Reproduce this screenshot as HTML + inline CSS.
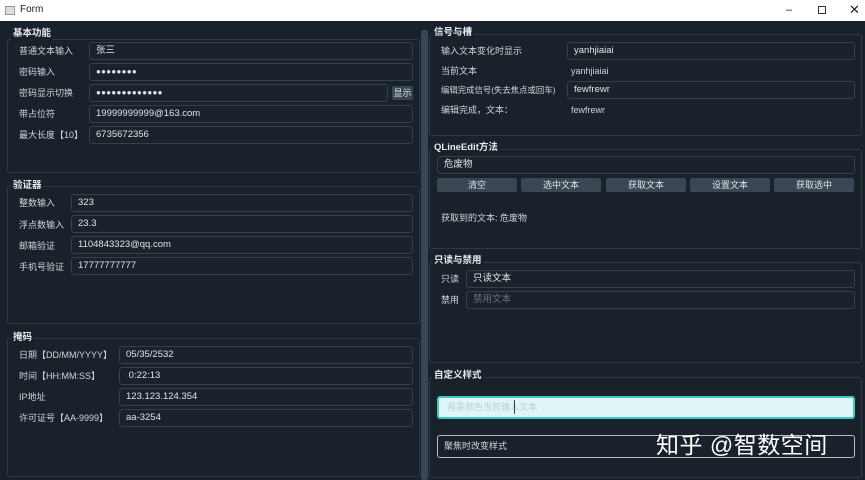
<!DOCTYPE html>
<html><head><meta charset="utf-8"><style>
*{margin:0;padding:0;box-sizing:border-box}
body{width:865px;height:480px;background:#19212b;position:relative;overflow:hidden;font-family:"Liberation Sans","Noto Sans CJK SC",sans-serif;font-size:9.5px;color:#d6dbe0}
.a{position:absolute}
.tb{left:0;top:0;width:865px;height:21px;background:#fff;color:#222;font-size:10px}
.g{border:1px solid #2f3a46;border-radius:3px}
.gt{font-weight:bold;font-size:9.5px;color:#e8ecef;background:#19212b;padding:0 2px;line-height:12px}
.i{border:1px solid #34404c;border-radius:3px;background:#1a222c;height:18px;line-height:16px;padding-left:6px;color:#e0e4e8}
.l{line-height:12px;color:#d0d5da;font-size:9px;white-space:nowrap}
.b{background:#3a4654;border-radius:2px;height:14px;line-height:14px;text-align:center;color:#dfe3e7;font-size:9px}
.p{font-size:8px;letter-spacing:0.3px}
</style></head><body>
<div class="a tb"><span class="a" style="left:5px;top:6px;width:10px;height:9px;border:1px solid #999;background:#ddd"></span><span class="a" style="left:20px;top:4px">Form</span>
<span class="a" style="left:786px;top:0;line-height:21px;font-size:11px">–</span><span class="a" style="left:818px;top:6px;width:8px;height:8px;border:1px solid #333"></span><span class="a" style="left:849px;top:2px;font-size:13px">✕</span></div>
<div class="a" style="left:421px;top:30px;width:7px;height:450px;background:#3a4656;border-radius:2px"></div>

<div class="a g" style="left:7px;top:39px;width:413px;height:134px"></div><div class="a gt" style="left:11px;top:28px">基本功能</div>
<div class="a l" style="left:19px;top:45px">普通文本输入</div><div class="a i" style="left:89px;top:42px;width:324px">张三</div>
<div class="a l" style="left:19px;top:66px">密码输入</div><div class="a i p" style="left:89px;top:63px;width:324px">●●●●●●●●</div>
<div class="a l" style="left:19px;top:87px">密码显示切换</div><div class="a i p" style="left:89px;top:84px;width:299px">●●●●●●●●●●●●●</div><div class="a b" style="left:392px;top:86px;width:21px">显示</div>
<div class="a l" style="left:19px;top:108px">带占位符</div><div class="a i" style="left:89px;top:105px;width:324px">19999999999@163.com</div>
<div class="a l" style="left:19px;top:129px">最大长度【10】</div><div class="a i" style="left:89px;top:126px;width:324px">6735672356</div>

<div class="a g" style="left:7px;top:186px;width:413px;height:138px"></div><div class="a gt" style="left:11px;top:180px">验证器</div>
<div class="a l" style="left:19px;top:197px">整数输入</div><div class="a i" style="left:71px;top:194px;width:342px">323</div>
<div class="a l" style="left:19px;top:219px">浮点数输入</div><div class="a i" style="left:71px;top:215px;width:342px">23.3</div>
<div class="a l" style="left:19px;top:240px">邮箱验证</div><div class="a i" style="left:71px;top:236px;width:342px">1104843323@qq.com</div>
<div class="a l" style="left:19px;top:261px">手机号验证</div><div class="a i" style="left:71px;top:257px;width:342px">17777777777</div>

<div class="a g" style="left:7px;top:338px;width:413px;height:139px"></div><div class="a gt" style="left:11px;top:332px">掩码</div>
<div class="a l" style="left:19px;top:349px">日期【DD/MM/YYYY】</div><div class="a i" style="left:119px;top:346px;width:294px">05/35/2532</div>
<div class="a l" style="left:19px;top:370px">时间【HH:MM:SS】</div><div class="a i" style="left:119px;top:367px;width:294px">&nbsp;0:22:13</div>
<div class="a l" style="left:19px;top:391px">IP地址</div><div class="a i" style="left:119px;top:388px;width:294px">123.123.124.354</div>
<div class="a l" style="left:19px;top:412px">许可证号【AA-9999】</div><div class="a i" style="left:119px;top:409px;width:294px">aa-3254</div>

<div class="a g" style="left:429px;top:34px;width:433px;height:102px"></div><div class="a gt" style="left:432px;top:27px">信号与槽</div>
<div class="a l" style="left:441px;top:45px">输入文本变化时显示</div><div class="a i" style="left:567px;top:42px;width:288px">yanhjiaiai</div>
<div class="a l" style="left:441px;top:65px">当前文本</div><div class="a l" style="left:571px;top:65px">yanhjiaiai</div>
<div class="a l" style="left:441px;top:84px;font-size:8.4px">编辑完成信号(失去焦点或回车)</div><div class="a i" style="left:567px;top:81px;width:288px">fewfrewr</div>
<div class="a l" style="left:441px;top:104px">编辑完成，文本：</div><div class="a l" style="left:571px;top:104px">fewfrewr</div>

<div class="a g" style="left:429px;top:149px;width:433px;height:100px"></div><div class="a gt" style="left:432px;top:142px">QLineEdit方法</div>
<div class="a i" style="left:437px;top:156px;width:418px">危废物</div>
<div class="a b" style="left:437px;top:178px;width:80px">清空</div><div class="a b" style="left:521px;top:178px;width:80px">选中文本</div><div class="a b" style="left:606px;top:178px;width:80px">获取文本</div><div class="a b" style="left:690px;top:178px;width:80px">设置文本</div><div class="a b" style="left:774px;top:178px;width:80px">获取选中</div>
<div class="a l" style="left:441px;top:212px">获取到的文本: 危废物</div>

<div class="a g" style="left:429px;top:262px;width:433px;height:101px"></div><div class="a gt" style="left:432px;top:255px">只读与禁用</div>
<div class="a l" style="left:441px;top:273px">只读</div><div class="a i" style="left:466px;top:270px;width:389px">只读文本</div>
<div class="a l" style="left:441px;top:294px">禁用</div><div class="a i" style="left:466px;top:291px;width:389px;color:#68727c">禁用文本</div>

<div class="a g" style="left:429px;top:377px;width:433px;height:101px"></div><div class="a gt" style="left:432px;top:370px">自定义样式</div>
<div class="a" style="left:437px;top:396px;width:418px;height:23px;background:#def6f8;border:2px solid #3ec7c4;border-radius:3px;color:#b8d0d2;line-height:19px;padding-left:8px;font-size:9px">背景颜色当前输入文本</div>
<div class="a" style="left:514px;top:400px;width:1px;height:14px;background:#444"></div>
<div class="a" style="left:437px;top:435px;width:418px;height:23px;border:1.5px solid #b9bec4;border-radius:3px;line-height:20px;padding-left:6px;font-size:9px">聚焦时改变样式</div>
<div class="a" style="left:656px;top:430px;font-size:23px;color:#fff;line-height:30px;letter-spacing:0.5px">知乎 @智数空间</div>
</body></html>
